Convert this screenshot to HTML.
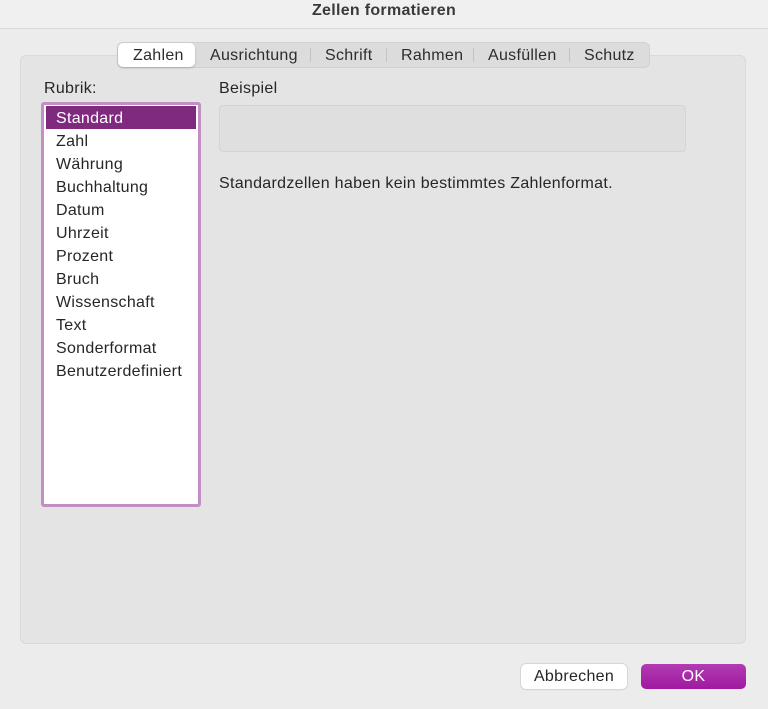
<!DOCTYPE html><html><head><style>
body{margin:0;width:768px;height:709px;background:#ececec;font-family:"Liberation Sans",sans-serif;color:#262626;position:relative;overflow:hidden;font-size:16px;letter-spacing:0.3px}
.a{position:absolute}
.title{top:0;left:0;width:768px;height:28px;border-bottom:1px solid #d8d8d8;background:#f0f0f0;text-align:center;line-height:22px;font-weight:bold;font-size:16px;color:#3a3a3a}
.panel{left:20px;top:55px;width:726px;height:589px;background:#e4e4e4;border-radius:6px;border:1px solid #dadada;box-sizing:border-box}
.seg{left:117px;top:42px;width:533px;height:26px;background:#dcdcdc;border-radius:6px;border:1px solid #d0d0d0;box-sizing:border-box}
.tab{top:43px;height:26px;line-height:26px;color:#2c2c2c}
.sep{top:48px;width:1px;height:14px;background:#c4c4c4}
.list{left:41px;top:102px;width:160px;height:405px;border:3px solid #c18fc1;border-radius:3px;box-sizing:border-box;background:#fff}
.row{position:absolute;left:2px;width:150px;height:23px;line-height:25px;padding-left:10px;box-sizing:border-box;white-space:nowrap}
.btn{top:664px;height:25px;line-height:25px;text-align:center;border-radius:5px}
</style></head><body>
<div class="a title">Zellen formatieren</div>
<div class="a panel"></div>
<div class="a seg"></div>
<div class="a" style="left:118px;top:43px;width:77px;height:24px;background:#fff;border-radius:5px;box-shadow:0 1px 2px rgba(0,0,0,.2)"></div>
<div class="a tab" style="left:133px">Zahlen</div>
<div class="a tab" style="left:210px">Ausrichtung</div>
<div class="a sep" style="left:310px"></div>
<div class="a tab" style="left:325px">Schrift</div>
<div class="a sep" style="left:386px"></div>
<div class="a tab" style="left:401px">Rahmen</div>
<div class="a sep" style="left:473px"></div>
<div class="a tab" style="left:488px">Ausfüllen</div>
<div class="a sep" style="left:569px"></div>
<div class="a tab" style="left:584px">Schutz</div>
<div class="a" style="left:44px;top:80px">Rubrik:</div>
<div class="a list">
<div class="row" style="top:1px;background:#7f2a7f;color:#fff">Standard</div>
<div class="row" style="top:24px">Zahl</div>
<div class="row" style="top:47px">Währung</div>
<div class="row" style="top:70px">Buchhaltung</div>
<div class="row" style="top:93px">Datum</div>
<div class="row" style="top:116px">Uhrzeit</div>
<div class="row" style="top:139px">Prozent</div>
<div class="row" style="top:162px">Bruch</div>
<div class="row" style="top:185px">Wissenschaft</div>
<div class="row" style="top:208px">Text</div>
<div class="row" style="top:231px">Sonderformat</div>
<div class="row" style="top:254px">Benutzerdefiniert</div>
</div>
<div class="a" style="left:219px;top:80px">Beispiel</div>
<div class="a" style="left:219px;top:105px;width:467px;height:47px;background:#dfdfdf;border:1px solid #d4d4d4;border-radius:4px;box-sizing:border-box"></div>
<div class="a" style="left:219px;top:175px">Standardzellen haben kein bestimmtes Zahlenformat.</div>
<div class="a btn" style="left:521px;width:106px;background:#fff;box-shadow:0 0 0 1px #d6d6d6,0 1px 1px rgba(0,0,0,.15)">Abbrechen</div>
<div class="a btn" style="left:641px;width:105px;background:linear-gradient(#b23bb2,#a019a0);color:#fff">OK</div>
</body></html>
